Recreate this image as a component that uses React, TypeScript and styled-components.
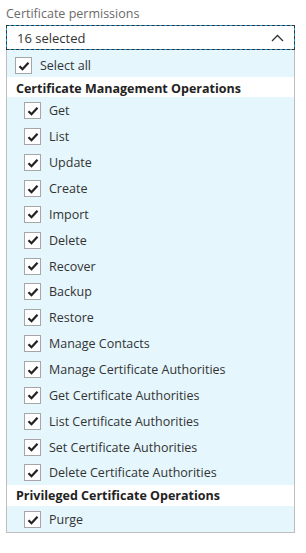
import React from "react";
import styled, { createGlobalStyle } from "styled-components";

const GlobalStyle = createGlobalStyle`
  body {
    margin: 0;
    background: #ffffff;
    font-family: "Open Sans", "Noto Sans", sans-serif;
    color: #252525;
  }
`;

const Wrapper = styled.div`
  width: 289px;
  padding: 4px 0 0 6px;
`;

const Label = styled.div`
  font-size: 12.5px;
  color: #6b6b6b;
  height: 21px;
  line-height: 19px;
`;

const Dropdown = styled.div`
  height: 23px;
  border: 1px solid #1ba1e2;
  outline: 1px dashed #333;
  outline-offset: -1px;
  display: flex;
  align-items: center;
  justify-content: space-between;
  padding: 0 10px 0 10px;
  font-size: 13px;
  color: #333;
`;

const Panel = styled.div`
  border: 1px solid #bdbdbd;
  border-top: none;
  background: #e5f6fd;
`;

const Row = styled.div<{ indent: number; h: number; pt: number }>`
  box-sizing: border-box;
  height: ${({ h }) => h}px;
  display: flex;
  align-items: center;
  padding-left: ${({ indent }) => indent}px;
  padding-top: ${({ pt }) => pt}px;
  gap: 8px;
  font-size: 12.5px;
  color: #333;
`;

const Header = styled.div<{ h: number; pt: number }>`
  box-sizing: border-box;
  height: ${({ h }) => h}px;
  display: flex;
  align-items: center;
  padding-left: 9px;
  padding-top: ${({ pt }) => pt}px;
  background: #ffffff;
  font-size: 12.5px;
  font-weight: 700;
  color: #222;
`;

const Box = styled.span`
  width: 15px;
  height: 15px;
  border: 1px solid #a6a6a6;
  background: #fff;
  display: flex;
  align-items: center;
  justify-content: center;
  flex-shrink: 0;
`;

function Check() {
  return (
    <Box>
      <svg width="12" height="10" viewBox="0 0 12 10">
        <path d="M1.5 5.2 L4.5 8.2 L10.5 1.8" fill="none" stroke="#222" strokeWidth="2.3" />
      </svg>
    </Box>
  );
}

const ops = [
  "Get",
  "List",
  "Update",
  "Create",
  "Import",
  "Delete",
  "Recover",
  "Backup",
  "Restore",
  "Manage Contacts",
  "Manage Certificate Authorities",
  "Get Certificate Authorities",
  "List Certificate Authorities",
  "Set Certificate Authorities",
  "Delete Certificate Authorities",
];

export default function App() {
  return (
    <Wrapper>
      <GlobalStyle />
      <Label>Certificate permissions</Label>
      <Dropdown>
        <span>16 selected</span>
        <svg width="13" height="8" viewBox="0 0 13 8">
          <path d="M1 7 L6.5 1.5 L12 7" fill="none" stroke="#333" strokeWidth="1.3" />
        </svg>
      </Dropdown>
      <Panel>
        <Row indent={8} h={27} pt={4}>
          <Check />
          Select all
        </Row>
        <Header h={20} pt={3}>Certificate Management Operations</Header>
        {ops.map((o) => (
          <Row key={o} indent={17} h={25.87} pt={2}>
            <Check />
            {o}
          </Row>
        ))}
        <Header h={21} pt={0}>Privileged Certificate Operations</Header>
        <Row indent={17} h={26} pt={2}>
          <Check />
          Purge
        </Row>
      </Panel>
    </Wrapper>
  );
}
